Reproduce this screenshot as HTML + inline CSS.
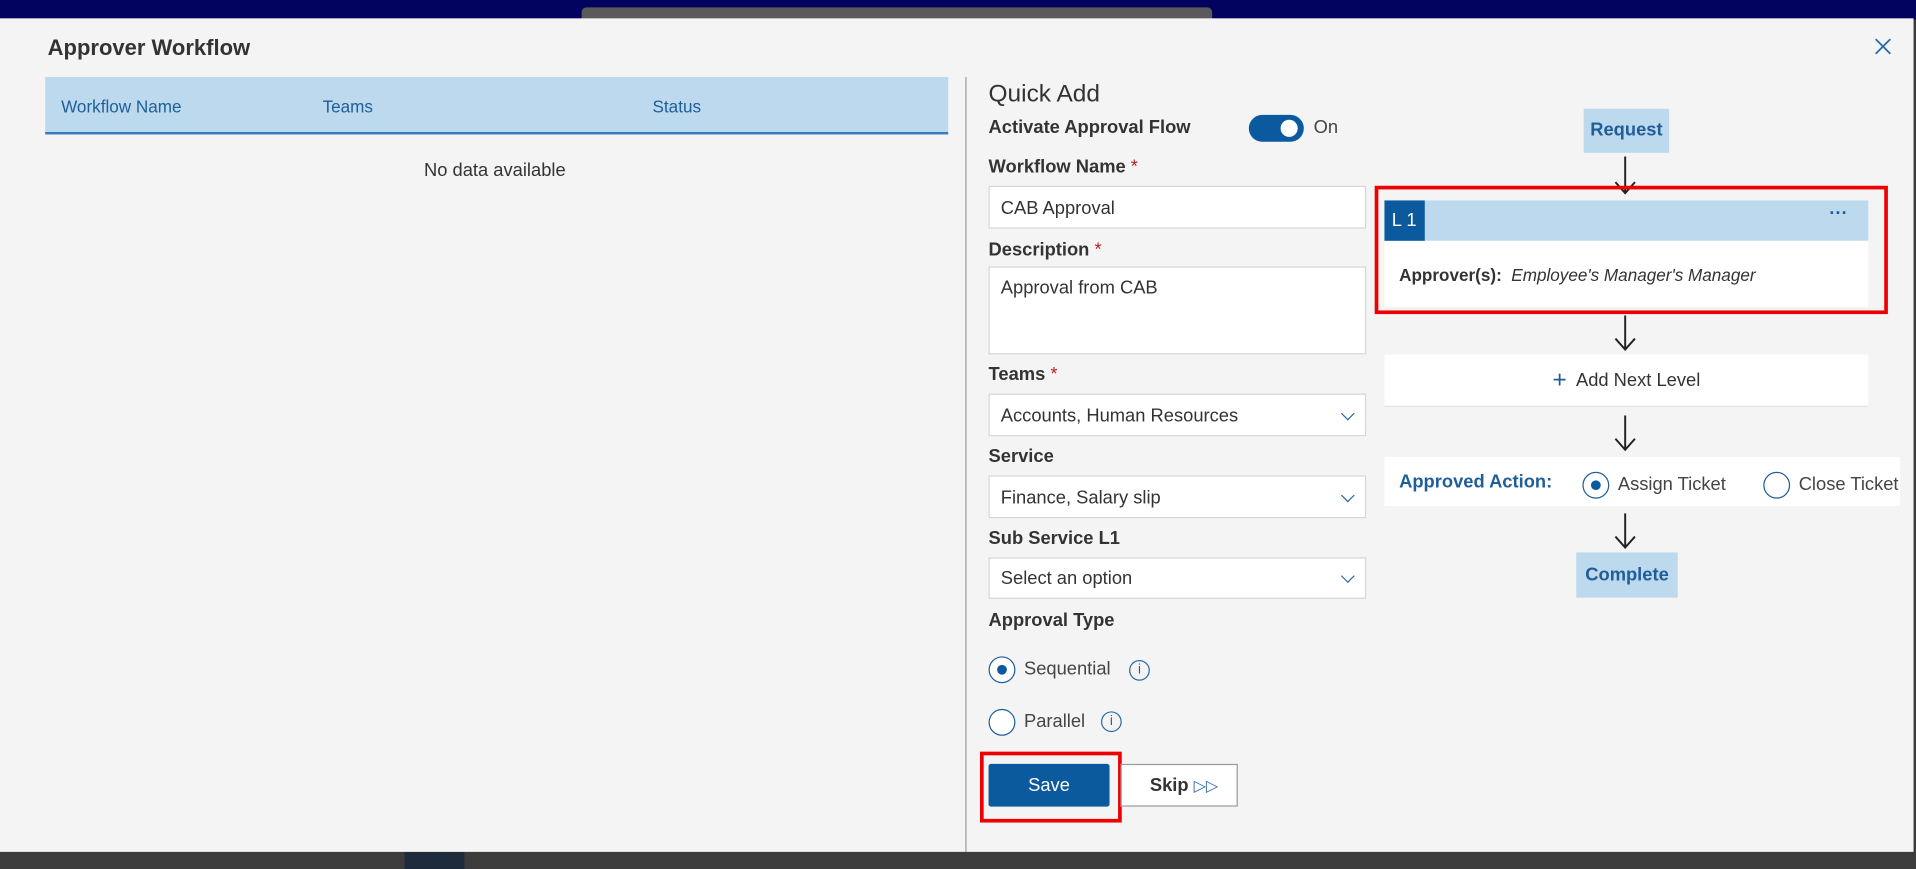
<!DOCTYPE html>
<html><head><meta charset="utf-8"><style>
*{box-sizing:border-box;margin:0;padding:0}
html,body{width:1916px;height:869px;overflow:hidden;background:#3c3c3c;font-family:"Liberation Sans",sans-serif;}
#s{position:absolute;left:0;top:0;width:1568px;height:711px;transform:scale(1.22194,1.2222);transform-origin:0 0;}
.a{position:absolute}
.lbl{position:absolute;left:809px;font-size:15px;font-weight:bold;color:#333;}
.req{color:#b22;font-weight:normal}
.inp{position:absolute;left:809px;width:309px;background:#fff;border:1px solid #d6d6d6;font-size:15px;color:#333;padding-left:9px;}
.chev{position:absolute;right:10px;top:50%;width:8px;height:8px;border-right:1.3px solid #2a6aa8;border-bottom:1.3px solid #2a6aa8;transform:translateY(-70%) rotate(45deg)}
.arrow{position:absolute;left:1320px;width:20px}
.blue{color:#1f5e99}
</style></head><body><div id="s">
<div class="a" style="left:0;top:0;width:1568px;height:16px;background:#02035e"></div>
<div class="a" style="left:476px;top:6px;width:516px;height:10px;background:#5a5a5a;border-radius:4px 4px 0 0"></div>
<div class="a" style="left:331px;top:697px;width:49px;height:14px;background:#1d2b3c"></div>
<div class="a" style="left:0;top:15px;width:1566px;height:682px;background:#f4f4f4"></div>
<div class="a" style="left:39px;top:29px;font-size:18px;font-weight:bold;color:#333">Approver Workflow</div>
<svg class="a" style="left:1533px;top:30px" width="16" height="16"><path d="M2 2L14 14M14 2L2 14" stroke="#2a6aa8" stroke-width="1.5"/></svg>
<div class="a" style="left:37px;top:63px;width:739px;height:47px;background:#bcd9ee;border-bottom:2px solid #3a7bbd"></div>
<div class="a blue" style="left:50px;top:79px;font-size:14px">Workflow Name</div>
<div class="a blue" style="left:264px;top:79px;font-size:14px">Teams</div>
<div class="a blue" style="left:534px;top:79px;font-size:14px">Status</div>
<div class="a" style="left:347px;top:131px;font-size:15px;color:#333">No data available</div>
<div class="a" style="left:790px;top:63px;width:1px;height:634px;background:#999"></div>
<div class="a" style="left:809px;top:66px;font-size:20px;color:#333">Quick Add</div>
<div class="lbl" style="top:96px">Activate Approval Flow</div>
<div class="a" style="left:1022px;top:94px;width:45px;height:22px;border-radius:11px;background:#0b5aa0"></div>
<div class="a" style="left:1048px;top:98px;width:14px;height:14px;border-radius:50%;background:#fff"></div>
<div class="a" style="left:1075px;top:96px;font-size:15px;color:#444">On</div>
<div class="lbl" style="top:128px">Workflow Name <span class="req">*</span></div>
<div class="inp" style="top:152px;height:35px;line-height:35px">CAB Approval</div>
<div class="lbl" style="top:196px">Description <span class="req">*</span></div>
<div class="inp" style="top:218px;height:72px;padding-top:8px">Approval from CAB</div>
<div class="lbl" style="top:298px">Teams <span class="req">*</span></div>
<div class="inp" style="top:322px;height:35px;line-height:35px">Accounts, Human Resources<span class="chev"></span></div>
<div class="lbl" style="top:365px">Service</div>
<div class="inp" style="top:389px;height:35px;line-height:35px">Finance, Salary slip<span class="chev"></span></div>
<div class="lbl" style="top:432px">Sub Service L1</div>
<div class="inp" style="top:456px;height:34px;line-height:34px">Select an option<span class="chev"></span></div>
<div class="lbl" style="top:499px">Approval Type</div>
<div class="a" style="left:809px;top:537px;width:22px;height:22px;border:1.5px solid #1f5e99;border-radius:50%;background:#fff"></div>
<div class="a" style="left:816px;top:544px;width:8px;height:8px;border-radius:50%;background:#0b5aa0"></div>
<div class="a" style="left:838px;top:539px;font-size:15px;color:#444">Sequential</div>
<div class="a blue" style="left:924px;top:540px;width:17px;height:17px;border:1.3px solid #2a6aa8;border-radius:50%;font-size:11px;text-align:center;line-height:15px">i</div>
<div class="a" style="left:809px;top:580px;width:22px;height:22px;border:1.5px solid #1f5e99;border-radius:50%;background:#fff"></div>
<div class="a" style="left:838px;top:582px;font-size:15px;color:#444">Parallel</div>
<div class="a blue" style="left:901px;top:582px;width:17px;height:17px;border:1.3px solid #2a6aa8;border-radius:50%;font-size:11px;text-align:center;line-height:15px">i</div>
<div class="a" style="left:802px;top:615px;width:116px;height:58px;border:3px solid #e00"></div>
<div class="a" style="left:809px;top:625px;width:99px;height:35px;background:#0b5a9e;color:#fff;font-size:15px;text-align:center;line-height:35px;border-radius:2px">Save</div>
<div class="a" style="left:917px;top:625px;width:96px;height:35px;background:#fff;border:1px solid #999;font-size:15px;font-weight:bold;color:#333;line-height:33px;padding-left:23px">Skip <span style="color:#2a6aa8;font-weight:normal;font-size:13px">&#9655;&#9655;</span></div>
<div class="a blue" style="left:1296px;top:89px;width:70px;height:36px;background:#bcd9ee;font-size:15px;font-weight:bold;text-align:center;line-height:36px">Request</div>
<svg class="arrow" style="top:128px" height="32" width="20"><path d="M10 0V30M2 21L10 30L18 21" stroke="#222" stroke-width="1.6" fill="none"/></svg>
<div class="a" style="left:1125px;top:152px;width:420px;height:105px;border:3px solid #e00"></div>
<div class="a" style="left:1133px;top:164px;width:396px;height:87px;background:#fff"></div>
<div class="a" style="left:1133px;top:164px;width:396px;height:33px;background:#bcd9ee"></div>
<div class="a" style="left:1133px;top:164px;width:33px;height:33px;background:#0b5a9e;color:#fff;font-size:15px;line-height:33px;padding-left:6px">L 1</div>
<div class="a blue" style="left:1497px;top:166px;font-size:15px;font-weight:bold">···</div>
<div class="a" style="left:1145px;top:217px;font-size:14px;color:#333"><b>Approver(s):</b>&nbsp; <i>Employee's Manager's Manager</i></div>
<svg class="arrow" style="top:258px" height="32" width="20"><path d="M10 0V28M2 19L10 28L18 19" stroke="#222" stroke-width="1.6" fill="none"/></svg>
<div class="a" style="left:1133px;top:290px;width:396px;height:43px;background:#fff;border-bottom:1px solid #e4e4e4;font-size:15px;color:#333;text-align:center;line-height:43px"><span class="blue" style="font-size:20px;vertical-align:-1px">+</span>&nbsp; Add Next Level</div>
<svg class="arrow" style="top:338px" height="32" width="20"><path d="M10 2V30M2 21L10 30L18 21" stroke="#222" stroke-width="1.6" fill="none"/></svg>
<div class="a" style="left:1133px;top:374px;width:396px;height:40px;background:#fff"></div>
<div class="a" style="left:1529px;top:374px;width:26px;height:40px;background:#fff"></div>
<div class="a blue" style="left:1145px;top:386px;font-size:15px;font-weight:bold">Approved Action:</div>
<div class="a" style="left:1295px;top:386px;width:22px;height:22px;border:1.5px solid #1f5e99;border-radius:50%"></div>
<div class="a" style="left:1302px;top:393px;width:8px;height:8px;border-radius:50%;background:#0b5aa0"></div>
<div class="a" style="left:1324px;top:388px;font-size:15px;color:#444">Assign Ticket</div>
<div class="a" style="left:1443px;top:386px;width:22px;height:22px;border:1.5px solid #1f5e99;border-radius:50%"></div>
<div class="a" style="left:1472px;top:388px;font-size:15px;color:#444">Close Ticket</div>
<svg class="arrow" style="top:418px" height="32" width="20"><path d="M10 2V30M2 21L10 30L18 21" stroke="#222" stroke-width="1.6" fill="none"/></svg>
<div class="a blue" style="left:1290px;top:452px;width:83px;height:37px;background:#bcd9ee;font-size:15px;font-weight:bold;text-align:center;line-height:37px">Complete</div>
</div></body></html>
